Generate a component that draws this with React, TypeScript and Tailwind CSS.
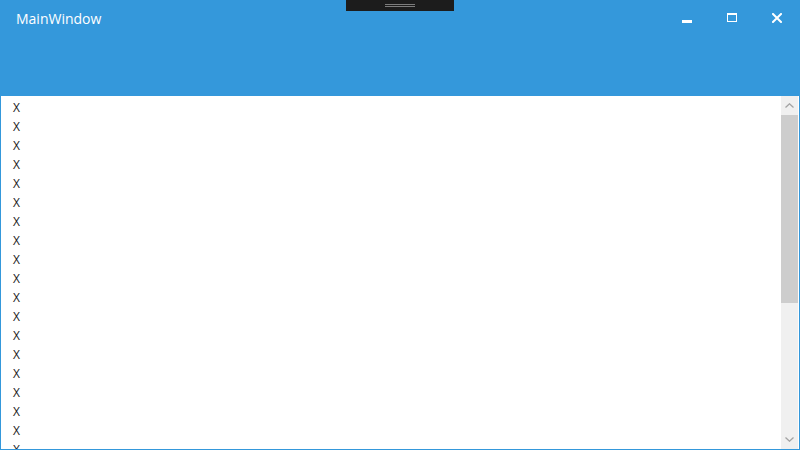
export default function App() {
  const rows = Array.from({ length: 19 });
  return (
    <div className="relative w-[800px] h-[450px] bg-[#3498db] flex flex-col overflow-hidden [font-family:'Open_Sans',sans-serif]">
      <div className="absolute left-[346px] top-0 w-[108px] h-[11px] bg-[#1c1c1c] flex flex-col items-center pt-[4px] gap-[1px]">
        <div className="w-[30px] h-px bg-[#7c7c7c]" />
        <div className="w-[30px] h-px bg-[#7c7c7c]" />
      </div>
      <div className="h-[96px] shrink-0 flex items-start">
        <div className="pl-[16px] pt-[9px] text-[14px] leading-[20px] text-white">MainWindow</div>
        <div className="ml-auto flex items-start pr-[18px] gap-[35px]">
          <button className="w-[10px] h-[36px] flex" aria-label="Minimize">
            <div className="mt-[20px] w-[10px] h-[3px] bg-white" />
          </button>
          <button className="w-[10px] h-[36px] flex" aria-label="Maximize">
            <div className="mt-[13px] w-[10px] h-[9px] border border-white border-t-2" />
          </button>
          <button className="w-[10px] h-[36px] flex" aria-label="Close">
            <svg className="mt-[13px]" width="10" height="10" viewBox="0 0 10 10">
              <path d="M1 1L9 9M9 1L1 9" stroke="white" strokeWidth="2" strokeLinecap="square" />
            </svg>
          </button>
        </div>
      </div>
      <div className="flex-1 mx-px mb-px bg-white flex min-h-0">
        <div className="flex-1 overflow-hidden pl-[12px] pt-[2px]">
          {rows.map((_, i) => (
            <div key={i} className="h-[19px] leading-[19px] text-[12px] text-[#1a1a1a]">
              X
            </div>
          ))}
        </div>
        <div className="w-[17px] mr-px bg-[#f0f0f0] flex flex-col">
          <div className="h-[19px] flex items-center justify-center">
            <svg width="9" height="5" viewBox="0 0 9 5">
              <path d="M0.5 4.5L4.5 0.8L8.5 4.5" fill="none" stroke="#a3a3a3" strokeWidth="1.3" />
            </svg>
          </div>
          <div className="h-[188px] bg-[#cdcdcd]" />
          <div className="flex-1" />
          <div className="h-[19px] flex items-center justify-center">
            <svg width="9" height="5" viewBox="0 0 9 5">
              <path d="M0.5 0.5L4.5 4.2L8.5 0.5" fill="none" stroke="#a3a3a3" strokeWidth="1.3" />
            </svg>
          </div>
        </div>
      </div>
    </div>
  );
}
